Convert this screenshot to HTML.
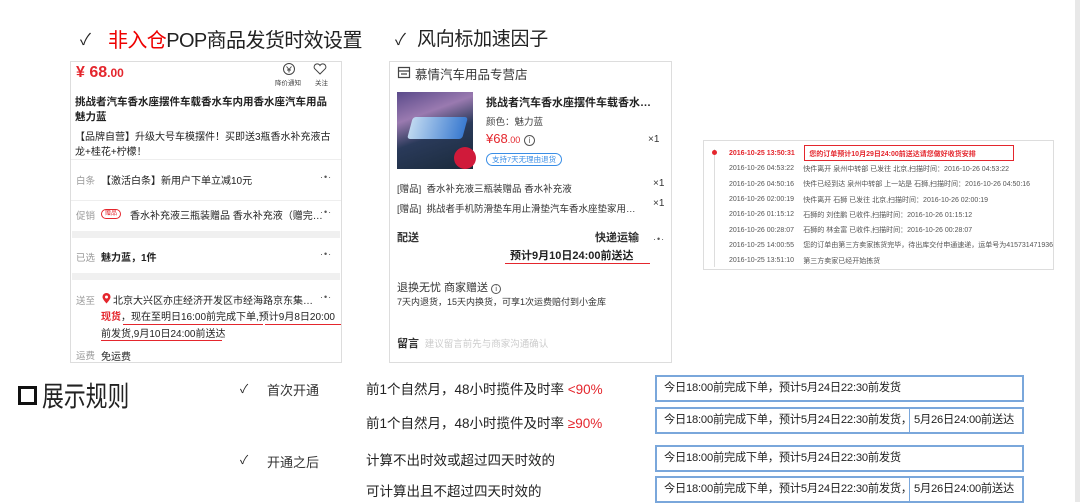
<!DOCTYPE html>
<html><head><meta charset="utf-8"><style>
*{margin:0;padding:0;box-sizing:border-box}
body{width:1080px;height:502px;background:#fff;position:relative;overflow:hidden;font-family:"Liberation Sans","Noto Sans CJK SC",sans-serif;color:#222}
.a{position:absolute;white-space:nowrap}
.card{position:absolute;border:1px solid #ddd;background:#fff}
.g{color:#999}
.band{position:absolute;left:1px;right:1px;height:7px;background:#f0f0f0}
.hl{position:absolute;height:1px;background:#eee}
.dots{position:absolute;font-size:9px;color:#555;letter-spacing:1px}
.box{position:absolute;left:655px;width:369px;height:27px;border:2px solid #7aa7db;font-size:11.2px;color:#222;padding-left:7px;line-height:23px;letter-spacing:-0.2px}
.box span{position:absolute;left:252px;top:0;height:23px;border-left:1px solid #7aa7db;padding-left:4px}
.lg td{font-size:7px;color:#555;height:15.3px}
</style></head><body>
<div style="position:absolute;right:0;top:0;width:5px;height:502px;background:#e8e8e8"></div>

<div class="a" style="left:80px;top:26px;font-size:16px">✓</div>
<div class="a" style="left:108px;top:24px;font-size:20px;letter-spacing:-0.6px"><span style="color:#e00">非入仓</span>POP商品发货时效设置</div>
<div class="a" style="left:395px;top:26px;font-size:16px">✓</div>
<div class="a" style="left:417px;top:24px;font-size:19px;letter-spacing:-0.3px">风向标加速因子</div>

<div class="card" style="left:70px;top:61px;width:272px;height:302px">
<div class="a" style="left:5px;top:2px;color:#e4262d;font-weight:bold;font-size:16px">¥ 68<span style="font-size:12px">.00</span></div>
<svg class="a" style="left:211px;top:1px" width="14" height="13" viewBox="0 0 14 13"><circle cx="7" cy="6" r="5.5" fill="none" stroke="#444" stroke-width="1"/><path d="M4.5 3.5 7 6.5 9.5 3.5M7 6.5v3M5 7h4" fill="none" stroke="#444" stroke-width="0.9"/></svg>
<div class="a" style="left:204px;top:15px;font-size:6.5px;color:#444">降价通知</div>
<svg class="a" style="left:242px;top:1px" width="14" height="12" viewBox="0 0 14 12"><path d="M7 11 1.5 5.5A3 3 0 0 1 7 2.5 3 3 0 0 1 12.5 5.5Z" fill="none" stroke="#444"/></svg>
<div class="a" style="left:244px;top:15px;font-size:6.5px;color:#444">关注</div>
<div class="a" style="left:4px;top:33px;font-size:10.5px;font-weight:bold;line-height:15px">挑战者汽车香水座摆件车载香水车内用香水座汽车用品<br>魅力蓝</div>
<div class="a" style="left:4px;top:68px;font-size:10px;line-height:15px;white-space:normal;width:260px">【品牌自营】升级大号车模摆件！买即送3瓶香水补充液古龙+桂花+柠檬！</div>
<div class="hl" style="left:0;right:0;top:97px"></div>
<div class="a g" style="left:5px;top:111px;font-size:9.5px">白条</div>
<div class="a" style="left:30px;top:110px;font-size:10px">【激活白条】新用户下单立减10元</div>
<div class="dots" style="left:249px;top:110px">·•·</div>
<div class="hl" style="left:0;right:0;top:138px"></div>
<div class="a g" style="left:5px;top:146px;font-size:9.5px">促销</div>
<div class="a" style="left:30px;top:147px;font-size:6px;color:#e4262d;border:1px solid #e4262d;border-radius:6px;padding:0 3px;line-height:8px">赠品</div>
<div class="a" style="left:59px;top:145px;font-size:10px">香水补充液三瓶装赠品 香水补充液（赠完…</div>
<div class="dots" style="left:249px;top:145px">·•·</div>
<div class="band" style="top:169px"></div>
<div class="a g" style="left:5px;top:188px;font-size:9.5px">已选</div>
<div class="a" style="left:30px;top:187px;font-size:10px;font-weight:bold">魅力蓝，1件</div>
<div class="dots" style="left:249px;top:187px">·•·</div>
<div class="band" style="top:211px"></div>
<div class="a g" style="left:5px;top:231px;font-size:9.5px">送至</div>
<svg class="a" style="left:31px;top:231px" width="9" height="11" viewBox="0 0 9 11"><path d="M4.5 10.5C1 6.5 0.5 5 0.5 4a4 4 0 0 1 8 0c0 1-0.5 2.5-4 6.5z" fill="#e4262d"/><circle cx="4.5" cy="4" r="1.5" fill="#fff"/></svg>
<div class="a" style="left:42px;top:230px;font-size:10px">北京大兴区亦庄经济开发区市经海路京东集…</div>
<div class="dots" style="left:249px;top:230px">·•·</div>
<div class="a" style="left:30px;top:248px;font-size:10px;line-height:15px"><span style="color:#e4262d;font-weight:bold">现货</span>，现在至明日16:00前完成下单,预计9月8日20:00</div>
<div class="a" style="left:30px;top:263px;font-size:10px">前发货,9月10日24:00前送达</div>
<div class="a" style="left:52px;top:262px;width:140px;height:1px;background:#e4262d"></div>
<div class="a" style="left:194px;top:262px;width:76px;height:1px;background:#e4262d"></div>
<div class="a" style="left:30px;top:278px;width:121px;height:1px;background:#e4262d"></div>
<div class="a g" style="left:5px;top:286px;font-size:9.5px">运费</div>
<div class="a" style="left:30px;top:286px;font-size:10px">免运费</div>
</div>

<div class="card" style="left:389px;top:61px;width:283px;height:302px">
<svg class="a" style="left:7px;top:4px" width="14" height="13" viewBox="0 0 14 13"><path d="M1.5 1.5h11v10h-11z M1.5 5h11 M4 8h6" fill="none" stroke="#444" stroke-width="1.2"/></svg>
<div class="a" style="left:25px;top:2px;font-size:12.5px;color:#333">慕情汽车用品专营店</div>
<div class="a" style="left:7px;top:30px;width:76px;height:77px;background:linear-gradient(160deg,#5a4a8a 0%,#9a7ab0 30%,#2a3a5a 55%,#1a2a3a 100%)"></div>
<div class="a" style="left:20px;top:55px;width:55px;height:22px;background:linear-gradient(90deg,#bfd8f0,#3a7ad0);transform:skewX(-15deg);border-radius:3px"></div>
<div class="a" style="left:64px;top:85px;width:22px;height:22px;border-radius:50%;background:#d01a3a"></div>
<div class="a" style="left:96px;top:32px;font-size:11px;font-weight:bold">挑战者汽车香水座摆件车载香水…</div>
<div class="a" style="left:96px;top:52px;font-size:9.5px;color:#444">颜色：魅力蓝</div>
<div class="a" style="left:96px;top:69px;font-size:13px;color:#e4262d">¥68<span style="font-size:9px">.00</span> <span style="color:#555;border:1px solid #555;border-radius:50%;display:inline-block;width:11px;height:11px;line-height:10px;text-align:center;font-size:8px">i</span></div>
<div class="a" style="left:258px;top:72px;font-size:10px;color:#333">×1</div>
<div class="a" style="left:96px;top:91px;font-size:7.5px;color:#3a8ee6;border:1px solid #3a8ee6;border-radius:7px;padding:0 5px;line-height:11px">支持7天无理由退货</div>
<div class="a" style="left:7px;top:119px;font-size:9.5px;color:#333">[赠品]&nbsp; 香水补充液三瓶装赠品 香水补充液</div>
<div class="a" style="left:263px;top:116px;font-size:10px;color:#333">×1</div>
<div class="a" style="left:7px;top:139px;font-size:9.5px;color:#333">[赠品]&nbsp; 挑战者手机防滑垫车用止滑垫汽车香水座垫家用…</div>
<div class="a" style="left:263px;top:136px;font-size:10px;color:#333">×1</div>
<div class="a" style="left:7px;top:167px;font-size:11px;color:#333;font-weight:bold">配送</div>
<div class="a" style="left:205px;top:167px;font-size:11px;color:#333;font-weight:bold">快递运输</div>
<div class="dots" style="left:263px;top:172px">·•·</div>
<div class="a" style="left:120px;top:185px;font-size:11px;color:#222;font-weight:bold">预计9月10日24:00前送达</div>
<div class="a" style="left:115px;top:201px;width:145px;height:1px;background:#e4262d"></div>
<div class="a" style="left:7px;top:217px;font-size:11px;color:#333">退换无忧 商家赠送 <span style="border:1px solid #555;border-radius:50%;display:inline-block;width:10px;height:10px;line-height:9px;text-align:center;font-size:7px">i</span></div>
<div class="a" style="left:7px;top:233px;font-size:9px;color:#333">7天内退货，15天内换货，可享1次运费赔付到小金库</div>
<div class="a" style="left:7px;top:273px;font-size:11px;color:#333;font-weight:bold">留言 <span style="color:#ccc;font-weight:normal;font-size:9.5px">&nbsp;建议留言前先与商家沟通确认</span></div>
</div>

<div class="card" style="left:703px;top:140px;width:351px;height:130px;border-color:#ddd">
<div class="a" style="left:10px;top:8px;width:1px;height:118px;background:#ddd"></div>
<div class="a" style="left:8px;top:9px;width:5px;height:5px;border-radius:50%;background:#e4262d"></div>
<div class="a" style="left:100px;top:4px;width:210px;height:16px;border:1.5px solid #e4262d"></div>
<table class="lg a" style="left:25px;top:5px;border-collapse:collapse">
<tr><td style="color:#e4262d;font-weight:bold;width:72px">2016-10-25 13:50:31</td><td style="color:#e4262d;font-weight:bold;padding-left:14px">您的订单预计10月29日24:00前送达请您做好收货安排</td></tr>
<tr><td>2016-10-26 04:53:22</td><td style="padding-left:8px">快件离开 泉州中转部 已发往 北京,扫描时间：2016-10-26 04:53:22</td></tr>
<tr><td>2016-10-26 04:50:16</td><td style="padding-left:8px">快件已经到达 泉州中转部 上一站是 石狮,扫描时间：2016-10-26 04:50:16</td></tr>
<tr><td>2016-10-26 02:00:19</td><td style="padding-left:8px">快件离开 石狮 已发往 北京,扫描时间：2016-10-26 02:00:19</td></tr>
<tr><td>2016-10-26 01:15:12</td><td style="padding-left:8px">石狮的 刘佳鹏 已收件,扫描时间：2016-10-26 01:15:12</td></tr>
<tr><td>2016-10-26 00:28:07</td><td style="padding-left:8px">石狮的 林金富 已收件,扫描时间：2016-10-26 00:28:07</td></tr>
<tr><td>2016-10-25 14:00:55</td><td style="padding-left:8px">您的订单由第三方卖家拣货完毕，待出库交付申通速递，运单号为415731471936</td></tr>
<tr><td>2016-10-25 13:51:10</td><td style="padding-left:8px">第三方卖家已经开始拣货</td></tr>
</table>
</div>

<div class="a" style="left:18px;top:386px;width:19px;height:19px;border:3.5px solid #111"></div>
<div class="a" style="left:42px;top:375px;font-size:28px;color:#222;transform:scaleX(0.78);transform-origin:left top">展示规则</div>
<div class="a" style="left:240px;top:380px;font-size:12px">✓</div>
<div class="a" style="left:267px;top:380px;font-size:13px;color:#333">首次开通</div>
<div class="a" style="left:240px;top:451px;font-size:12px">✓</div>
<div class="a" style="left:267px;top:452px;font-size:13px;color:#333">开通之后</div>
<div class="a" style="left:366px;top:378px;font-size:13.5px;color:#222">前1个自然月，48小时揽件及时率 <span style="color:#e4262d">&lt;90%</span></div>
<div class="a" style="left:366px;top:412px;font-size:13.5px;color:#222">前1个自然月，48小时揽件及时率 <span style="color:#e4262d">≥90%</span></div>
<div class="a" style="left:366px;top:449px;font-size:13.5px;color:#222">计算不出时效或超过四天时效的</div>
<div class="a" style="left:366px;top:480px;font-size:13.5px;color:#222">可计算出且不超过四天时效的</div>

<div class="box" style="top:375px">今日18:00前完成下单，预计5月24日22:30前发货</div>
<div class="box" style="top:407px">今日18:00前完成下单，预计5月24日22:30前发货，<span>5月26日24:00前送达</span></div>
<div class="box" style="top:445px">今日18:00前完成下单，预计5月24日22:30前发货</div>
<div class="box" style="top:476px">今日18:00前完成下单，预计5月24日22:30前发货，<span>5月26日24:00前送达</span></div>
</body></html>
